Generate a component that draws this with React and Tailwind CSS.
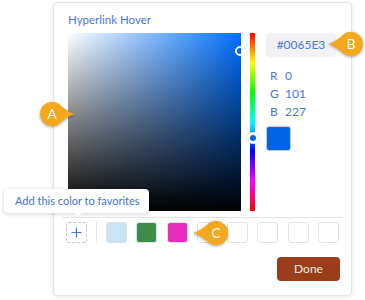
import React from "react";

function Badge({ letter, flip, className }) {
  return (
    <div className={"absolute w-[36px] h-[24px] drop-shadow-[0_1px_1.5px_rgba(0,0,0,0.35)] " + className}>
      <svg width="36" height="24" viewBox="0 0 36 24" className="absolute inset-0" style={flip ? { transform: "scaleX(-1)" } : undefined}>
        <path d="M1 12 C6 11 11 7 15 4 A12 12 0 1 1 15 20 C11 17 6 13 1 12 Z" fill="#f5a81c" />
      </svg>
      <span className={"absolute top-0 h-[24px] w-[24px] flex items-center justify-center text-white text-[14px] leading-none " + (flip ? "left-0" : "left-[12px]")}>
        {letter}
      </span>
    </div>
  );
}

export default function App() {
  const favs = ["#c9e5f5", "#3f8b4b", "#e82bbf", null, null, null, null, null];
  return (
    <div className="w-[365px] h-[300px] bg-white relative overflow-hidden font-['Lato',sans-serif]">
      <div className="ml-[53px] mt-[2px] w-[299px] h-[294px] border border-[#e4e4e9] rounded-[4px] shadow-[0_1px_4px_rgba(0,0,0,0.10)] bg-white flex flex-col">
        <div className="pl-[14px] pt-[9px] h-[30px] text-[11.5px] leading-[16px] text-[#4a78d8]">Hyperlink Hover</div>
        <div className="flex pl-[14px]">
          <div className="relative w-[173px] h-[178px] bg-[#0070ff] bg-[linear-gradient(to_top,#000,transparent),linear-gradient(to_right,#fff,transparent)]">
            <div className="absolute left-[167px] top-[13px] w-[10px] h-[10px] rounded-full border-2 border-white shadow-[0_0_1px_rgba(0,0,0,0.4)]" />
          </div>
          <div className="relative ml-[9px] w-[5px] h-[178px] bg-[linear-gradient(to_bottom,#ff0000,#ffff00,#00ff00,#00ffff,#0000ff,#ff00ff,#ff0000)]">
            <div className="absolute left-[-3.5px] top-[99px] w-[12px] h-[12px] rounded-full bg-white shadow-[0_0_2px_rgba(0,0,0,0.3)] flex items-center justify-center">
              <div className="w-[6px] h-[6px] rounded-full bg-[#0065e3]" />
            </div>
          </div>
          <div className="ml-[11px] w-[70px] flex flex-col">
            <div className="h-[24px] rounded-[4px] bg-[#f2f2f6] flex items-center justify-center text-[12px] text-[#4a78d8]">#0065E3</div>
            <div className="mt-[10px] pl-[4px] text-[12px] leading-[18px] text-[#4a78d8]">
              <div className="flex"><span className="w-[15px]">R</span><span>0</span></div>
              <div className="flex"><span className="w-[15px]">G</span><span>101</span></div>
              <div className="flex"><span className="w-[15px]">B</span><span>227</span></div>
            </div>
            <div className="mt-[5px] w-[25px] h-[25px] rounded-[3px] bg-[#0065e3] border border-[#c8cbd3]" />
          </div>
        </div>
        <div className="mx-[8px] mt-[6px] h-px bg-[#e4e4e9]" />
        <div className="mt-[4px] pl-[12px] flex items-center">
          <div className="w-[21px] h-[21px] border border-dashed border-[#c4c4cc] rounded-[2px] flex items-center justify-center text-[#4a78d8]">
            <svg width="11" height="11" viewBox="0 0 11 11"><path d="M5.5 0.5v10M0.5 5.5h10" stroke="#4a78d8" strokeWidth="1.2" /></svg>
          </div>
          <div className="ml-[9px] w-px h-[21px] bg-[#e4e4e9]" />
          <div className="ml-[9px] flex gap-[9.3px]">
            {favs.map((c, i) => (
              <div
                key={i}
                className={"w-[21px] h-[21px] rounded-[3px] border " + (c ? "border-[#e0e0e6]" : "border-[#e2e2e7] bg-white")}
                style={c ? { backgroundColor: c } : undefined}
              />
            ))}
          </div>
        </div>
        <div className="mt-[14px] pr-[11px] flex justify-end">
          <button className="w-[63px] h-[24px] rounded-[4px] bg-[#9b3c1b] text-[#f6e9e3] text-[12px] leading-none flex items-center justify-center">Done</button>
        </div>
      </div>

      <div className="absolute left-[4px] top-[189px] w-[145px] h-[24px] bg-white rounded-[4px] shadow-[0_1px_4px_rgba(0,0,0,0.18)] flex items-center pl-[11px] text-[11px] text-[#4372d8]">
        Add this color to favorites
        <div className="absolute left-[69px] top-[23px] w-0 h-0 border-l-[5px] border-r-[5px] border-t-[5px] border-l-transparent border-r-transparent border-t-white" />
      </div>

      <Badge letter="A" flip className="left-[40px] top-[102px]" />
      <Badge letter="B" className="left-[327px] top-[32px]" />
      <Badge letter="C" className="left-[192px] top-[221px]" />
    </div>
  );
}
